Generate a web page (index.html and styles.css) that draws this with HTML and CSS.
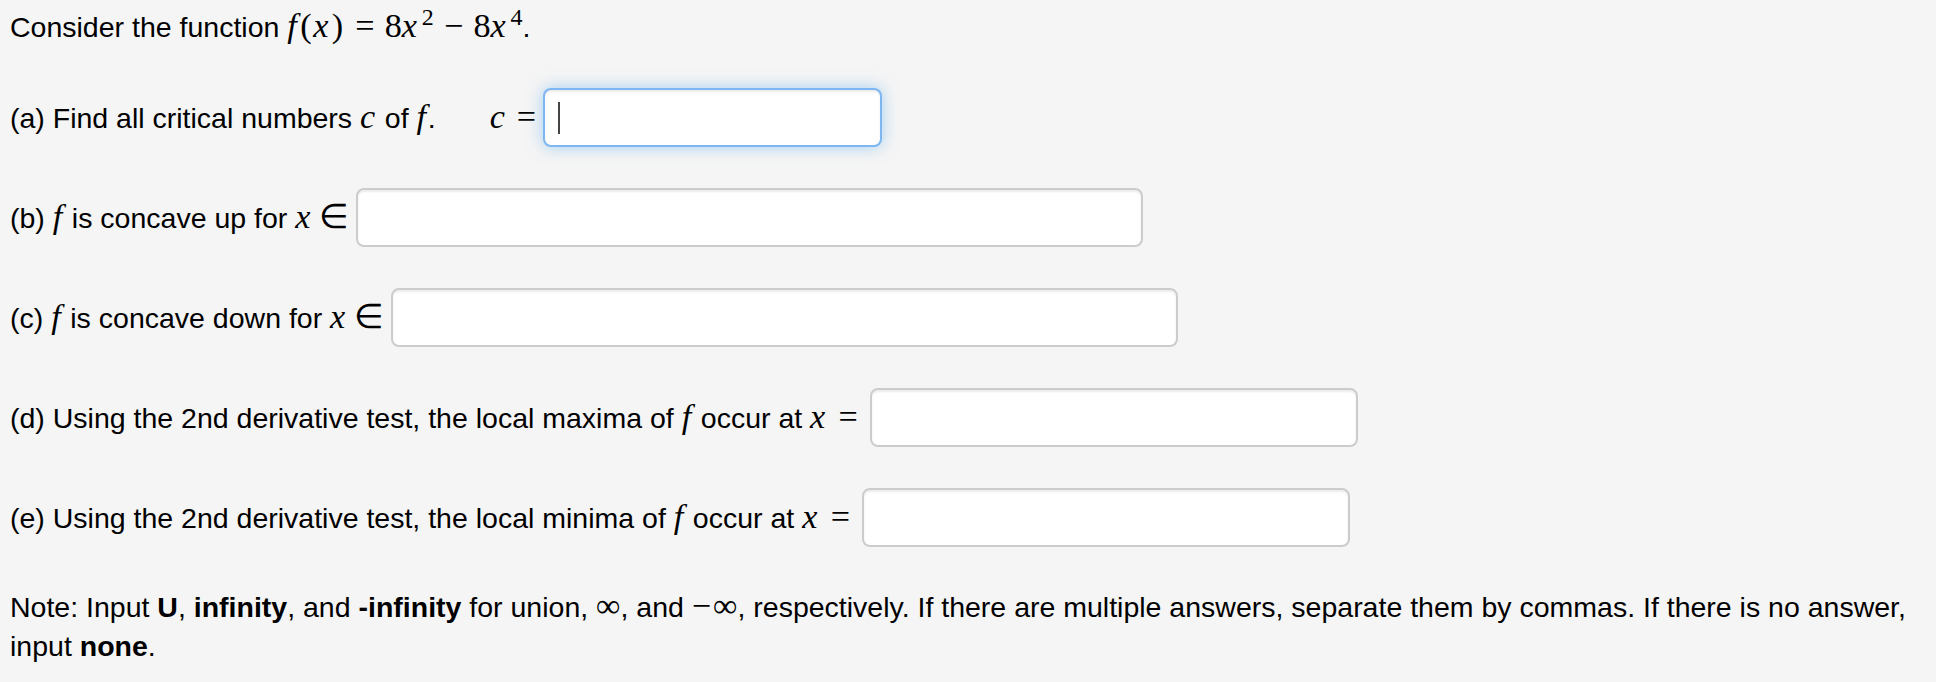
FILE: index.html
```html
<!DOCTYPE html>
<html lang="en">
<head>
    <meta charset="UTF-8">
    <meta name="viewport" content="width=device-width, initial-scale=1.0">
    <title>Concavity</title>
    <link rel="stylesheet" href="styles.css">
</head>
<body>
    <div class="problem">
        <p class="line">Consider the function <span class="math"><i>f</i><span class="paren">(</span><i>x</i><span class="paren">)</span><span class="rel">=</span>8<i>x</i><sup>2</sup><span class="bin">&minus;</span>8<i>x</i><sup>4</sup></span>.</p>

        <div class="row">
            <span>(a) Find all critical numbers <span class="math"><i>c</i></span> of <span class="math"><i>f</i></span>.</span>
            <span class="math label-c"><i>c</i><span class="rel">=</span></span>
            <span class="field">
                <input type="text" class="answer answer-sm focused">
                <span class="caret"></span>
            </span>
        </div>

        <div class="row">
            <span>(b) <span class="math"><i>f</i></span> is concave up for <span class="math"><i>x</i><span class="rel elem">&isin;</span></span></span>
            <input type="text" class="answer answer-lg">
        </div>

        <div class="row">
            <span>(c) <span class="math"><i>f</i></span> is concave down for <span class="math"><i>x</i><span class="rel elem">&isin;</span></span></span>
            <input type="text" class="answer answer-lg">
        </div>

        <div class="row">
            <span>(d) Using the 2nd derivative test, the local maxima of <span class="math"><i>f</i></span> occur at <span class="math"><i>x</i><span class="rel">=</span></span></span>
            <input type="text" class="answer answer-md">
        </div>

        <div class="row">
            <span>(e) Using the 2nd derivative test, the local minima of <span class="math"><i>f</i></span> occur at <span class="math"><i>x</i><span class="rel">=</span></span></span>
            <input type="text" class="answer answer-md">
        </div>

        <p class="line note">Note: Input <b>U</b>, <b>infinity</b>, and <b>-infinity</b> for union, <span class="math">&infin;</span>, and <span class="math"><span class="neg">&minus;</span>&infin;</span>, respectively. If there are multiple answers, separate them by commas. If there is no answer, input <b>none</b>.</p>
    </div>
</body>
</html>
```

FILE: styles.css
```css
body {
    margin: 0;
    padding: 8px 10px;
    background-color: #f5f5f5;
    font-family: "Liberation Sans", Arial, sans-serif;
    font-size: 28.5px;
    color: #000;
}

.problem {
    display: flex;
    flex-direction: column;
    gap: 41px;
}

.line {
    margin: 0;
    line-height: 39px;
}

.row {
    display: flex;
    align-items: center;
    height: 59px;
    white-space: nowrap;
}

.math {
    font-family: "Liberation Serif", "Times New Roman", serif;
    font-size: 1.2em;
    line-height: 1;
}

.math .math {
    font-size: 1em;
}

.math i {
    font-style: italic;
    margin-right: 0.05em;
}

.paren {
    margin: 0 0.05em;
}

.math sup {
    font-size: 0.7em;
    vertical-align: 0.5em;
    line-height: 0;
    margin-left: 3px;
}

.rel {
    margin: 0 0.3em;
}

.row > span > .math:last-child .rel {
    margin-left: 0.34em;
    margin-right: 0.34em;
}

.row > span > .math:last-child .elem {
    margin-left: 0.2em;
    margin-right: 0.2em;
}

.bin {
    margin: 0 0.3em;
}

.neg {
    margin-right: 0.06em;
}

.label-c {
    margin-left: 54px;
}

.label-c .rel {
    margin-right: 0.2em;
}

.field {
    position: relative;
    display: flex;
}

.answer {
    box-sizing: border-box;
    height: 59px;
    margin: 0;
    padding: 8px 14px;
    background-color: #fff;
    border: 2px solid #cccccc;
    border-radius: 8px;
    box-shadow: inset 0 2px 2px rgba(0, 0, 0, 0.075);
    font-family: "Liberation Sans", Arial, sans-serif;
    font-size: 28px;
    outline: none;
}

.answer.focused {
    border-color: rgba(82, 158, 236, 0.75);
    box-shadow: inset 0 2px 2px rgba(0, 0, 0, 0.075), 0 0 16px rgba(82, 168, 236, 0.5);
}

.answer-sm {
    width: 339px;
}

.answer-md {
    width: 488px;
}

.answer-lg {
    width: 787px;
}

.caret {
    position: absolute;
    left: 15px;
    top: 14px;
    width: 2px;
    height: 32px;
    background-color: #444;
}

.note b {
    font-weight: bold;
}
```
